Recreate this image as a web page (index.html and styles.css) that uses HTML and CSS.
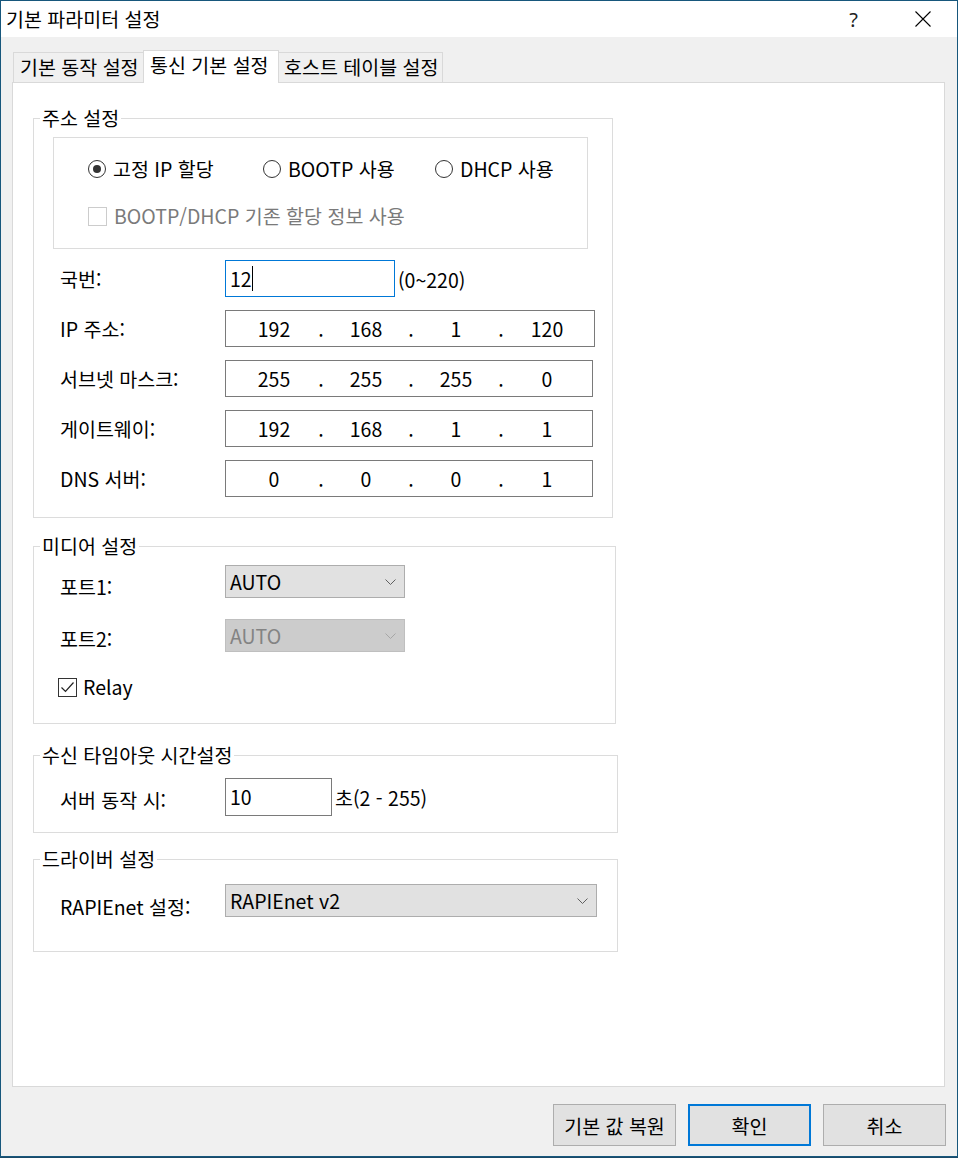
FILE: index.html
```html
<!DOCTYPE html>
<html lang="ko">
<head>
  <meta charset="UTF-8">
  <title>기본 파라미터 설정</title>
  <link rel="stylesheet" href="styles.css">
</head>
<body>
  <div class="window">
    <div class="titlebar">
      <span class="title">기본 파라미터 설정</span>
      <span class="caption-btn help">?</span>
      <span class="caption-btn">
        <svg width="16" height="16" viewBox="0 0 16 16"><path d="M0.5 0.5 L15.5 15.5 M15.5 0.5 L0.5 15.5" stroke="#000" stroke-width="1.1" fill="none"/></svg>
      </span>
    </div>

    <div class="tabs">
      <div class="tab tab-first">기본 동작 설정</div>
      <div class="tab tab-active">통신 기본 설정</div>
      <div class="tab tab-last">호스트 테이블 설정</div>
    </div>

    <div class="panel">
      <!-- 주소 설정 -->
      <fieldset class="group group-address">
        <legend>주소 설정</legend>
        <div class="group-body">
          <div class="option-box">
            <div class="radio-row">
              <label class="radio-item"><span class="radio checked"></span>고정 IP 할당</label>
              <label class="radio-item"><span class="radio"></span>BOOTP 사용</label>
              <label class="radio-item"><span class="radio"></span>DHCP 사용</label>
            </div>
            <div class="check-row disabled">
              <span class="checkbox"></span>BOOTP/DHCP 기존 할당 정보 사용
            </div>
          </div>

          <div class="field-row first">
            <span class="label">국번:</span>
            <div class="inline">
              <div class="textbox focused station"><span>12</span><span class="caret"></span></div>
              <span class="hint">(0~220)</span>
            </div>
          </div>
          <div class="field-row">
            <span class="label">IP 주소:</span>
            <div class="ip-box wide">
              <span>192</span><span>.</span><span>168</span><span>.</span><span>1</span><span>.</span><span>120</span>
            </div>
          </div>
          <div class="field-row">
            <span class="label">서브넷 마스크:</span>
            <div class="ip-box">
              <span>255</span><span>.</span><span>255</span><span>.</span><span>255</span><span>.</span><span>0</span>
            </div>
          </div>
          <div class="field-row">
            <span class="label">게이트웨이:</span>
            <div class="ip-box">
              <span>192</span><span>.</span><span>168</span><span>.</span><span>1</span><span>.</span><span>1</span>
            </div>
          </div>
          <div class="field-row">
            <span class="label">DNS 서버:</span>
            <div class="ip-box">
              <span>0</span><span>.</span><span>0</span><span>.</span><span>0</span><span>.</span><span>1</span>
            </div>
          </div>
        </div>
      </fieldset>

      <!-- 미디어 설정 -->
      <fieldset class="group group-media">
        <legend>미디어 설정</legend>
        <div class="group-body">
          <div class="field-row select-row first">
            <span class="label">포트1:</span>
            <div class="select port">AUTO<svg class="chevron" width="11" height="6" viewBox="0 0 11 6"><path d="M0.5 0.5 L5.5 5.5 L10.5 0.5" stroke="#606060" fill="none"/></svg></div>
          </div>
          <div class="field-row select-row port2">
            <span class="label">포트2:</span>
            <div class="select port disabled">AUTO<svg class="chevron" width="11" height="6" viewBox="0 0 11 6"><path d="M0.5 0.5 L5.5 5.5 L10.5 0.5" stroke="#a6a6a6" fill="none"/></svg></div>
          </div>
          <div class="check-row relay">
            <span class="checkbox checked">
              <svg width="17" height="17" viewBox="0 0 17 17"><path d="M2.5 8.5 L6.5 12.5 L14.5 3.5" stroke="#222" stroke-width="1.2" fill="none"/></svg>
            </span>Relay
          </div>
        </div>
      </fieldset>

      <!-- 수신 타임아웃 시간설정 -->
      <fieldset class="group group-timeout">
        <legend>수신 타임아웃 시간설정</legend>
        <div class="group-body">
          <div class="field-row timeout-row first">
            <span class="label">서버 동작 시:</span>
            <div class="inline">
              <div class="textbox timeout">10</div>
              <span class="hint">초(2 - 255)</span>
            </div>
          </div>
        </div>
      </fieldset>

      <!-- 드라이버 설정 -->
      <fieldset class="group group-driver">
        <legend>드라이버 설정</legend>
        <div class="group-body">
          <div class="field-row select-row driver-row first">
            <span class="label">RAPIEnet 설정:</span>
            <div class="select driver">RAPIEnet v2<svg class="chevron" width="11" height="6" viewBox="0 0 11 6"><path d="M0.5 0.5 L5.5 5.5 L10.5 0.5" stroke="#606060" fill="none"/></svg></div>
          </div>
        </div>
      </fieldset>
    </div>

    <div class="buttons">
      <button class="button">기본 값 복원</button>
      <button class="button default">확인</button>
      <button class="button">취소</button>
    </div>
  </div>
</body>
</html>
```

FILE: styles.css
```css
html {
  background-color: #1b4a68;
}
body {
  margin: 0;
  font-family: "Noto Sans CJK KR", "Noto Sans", sans-serif;
  font-size: 19.5px;
  color: #000;
}
.window {
  width: 958px;
  height: 1157px;
  box-sizing: border-box;
  border: 1px solid #17577c;
  background-color: #f0f0f0;
  display: flex;
  flex-direction: column;
}

/* title bar */
.titlebar {
  height: 36px;
  flex: none;
  background-color: #fff;
  display: flex;
  align-items: center;
}
.title {
  flex: 1;
  padding-left: 5px;
  line-height: 24px;
}
.caption-btn {
  width: 69px;
  height: 36px;
  display: flex;
  align-items: center;
  justify-content: center;
}
.help {
  font-family: "Noto Sans", sans-serif;
  font-size: 20px;
  color: #222;
}

/* tabs */
.tabs {
  display: flex;
  align-items: flex-end;
  height: 32px;
  margin: 13px 0 0 12px;
  flex: none;
}
.tab {
  height: 30px;
  box-sizing: border-box;
  border: 1px solid #d9d9d9;
  border-bottom: none;
  padding-left: 6px;
  line-height: 28px;
  white-space: nowrap;
}
.tab-first {
  width: 131px;
}
.tab-active {
  width: 136px;
  height: 33px;
  margin: 0 0 -1px -1px;
  background-color: #fff;
  position: relative;
  z-index: 1;
}
.tab-last {
  width: 165px;
  margin-left: -1px;
  padding-left: 5px;
}

/* tab panel */
.panel {
  flex: none;
  width: 933px;
  height: 1005px;
  margin-left: 11px;
  box-sizing: border-box;
  border: 1px solid #d9d9d9;
  background-color: #fff;
  padding-left: 20px;
}

/* group boxes */
.group {
  margin: 0;
  padding: 0;
  min-width: 0;
  box-sizing: border-box;
  border: 1px solid #dcdcdc;
}
.group legend {
  margin-left: 6px;
  padding: 0 2px;
  line-height: 24px;
}
.group-body {
  padding-left: 19px;
}
.group-address {
  width: 580px;
  margin-top: 23px;
}
.group-address .group-body {
  padding-top: 7px;
  padding-bottom: 20px;
}
.group-media {
  width: 583px;
  margin-top: 16px;
}
.group-media .group-body {
  padding-top: 7px;
  padding-bottom: 24px;
}
.group-timeout {
  width: 585px;
  margin-top: 19px;
}
.group-timeout .group-body {
  padding-top: 11px;
  padding-bottom: 16px;
}
.group-driver {
  width: 585px;
  margin-top: 14px;
}
.group-driver .group-body {
  padding-top: 13px;
  padding-bottom: 32px;
}

/* radio / checkbox box */
.option-box {
  width: 535px;
  height: 112px;
  box-sizing: border-box;
  border: 1px solid #dcdcdc;
  padding: 19px 0 0 34px;
}
.radio-row {
  display: grid;
  grid-template-columns: 175px 172px auto;
  line-height: 24px;
}
.radio-item {
  display: flex;
  align-items: center;
  gap: 7px;
  white-space: nowrap;
}
.radio {
  width: 18px;
  height: 18px;
  box-sizing: border-box;
  border: 1px solid #333;
  border-radius: 50%;
  display: flex;
  align-items: center;
  justify-content: center;
}
.radio.checked::after {
  content: "";
  width: 8px;
  height: 8px;
  border-radius: 50%;
  background-color: #333;
}
.check-row {
  display: flex;
  align-items: center;
  gap: 7px;
  line-height: 24px;
  margin-top: 23px;
  white-space: nowrap;
}
.check-row.disabled {
  color: #7a7a7a;
}
.checkbox {
  width: 19px;
  height: 19px;
  box-sizing: border-box;
  border: 1px solid #cccccc;
  display: flex;
  align-items: center;
  justify-content: center;
}
.checkbox.checked {
  border-color: #333;
}
.relay {
  margin: 23px 0 0 5px;
  gap: 6px;
}

/* label + control rows */
.field-row {
  display: grid;
  grid-template-columns: 165px auto;
  align-items: start;
  padding-left: 7px;
  margin-top: 13px;
}
.field-row.first {
  margin-top: 11px;
}
.group-media .field-row.first,
.group-timeout .field-row.first,
.group-driver .field-row.first {
  margin-top: 0;
}
.label {
  line-height: 24px;
  padding-top: 7px;
  white-space: nowrap;
}
.select-row .label {
  padding-top: 10px;
}
.port2 {
  margin-top: 20px;
}
.port2 .label {
  padding-top: 8px;
}
.timeout-row .label {
  padding-top: 10px;
}
.driver-row .label {
  padding-top: 11px;
}
.inline {
  display: flex;
  align-items: center;
  gap: 3px;
}
.hint {
  line-height: 24px;
  white-space: nowrap;
  padding-top: 2px;
}

.textbox {
  height: 37px;
  box-sizing: border-box;
  border: 1px solid #7a7a7a;
  padding-left: 4px;
  line-height: 33px;
  display: flex;
  align-items: center;
}
.textbox.focused {
  border-color: #0078d7;
}
.station {
  width: 170px;
}
.caret {
  width: 1px;
  height: 25px;
  background-color: #000;
}
.timeout {
  width: 107px;
  height: 38px;
  align-items: flex-start;
  padding-top: 1px;
}

.ip-box {
  width: 368px;
  height: 37px;
  box-sizing: border-box;
  border: 1px solid #7a7a7a;
  padding-left: 4px;
  display: grid;
  grid-template-columns: 88px 6px 84px 6px 84px 6px 86px;
  align-items: center;
  text-align: center;
  line-height: 33px;
}
.ip-box.wide {
  width: 370px;
}

.select {
  height: 33px;
  box-sizing: border-box;
  border: 1px solid #adadad;
  background-color: #e1e1e1;
  padding: 0 8px 0 4px;
  display: flex;
  align-items: center;
  justify-content: space-between;
  line-height: 30px;
}
.select.disabled {
  background-color: #cccccc;
  border-color: #bfbfbf;
  color: #838383;
}
.port {
  width: 180px;
}
.driver {
  width: 372px;
}
.chevron {
  flex: none;
}

/* bottom buttons */
.buttons {
  display: flex;
  justify-content: flex-end;
  gap: 12px;
  margin: 17px 11px 0 0;
}
.button {
  width: 123px;
  height: 42px;
  box-sizing: border-box;
  border: 1px solid #adadad;
  background-color: #e1e1e1;
  font-family: inherit;
  font-size: 19.5px;
  color: #000;
  padding: 0;
}
.button.default {
  border: 2px solid #0078d7;
}
```
